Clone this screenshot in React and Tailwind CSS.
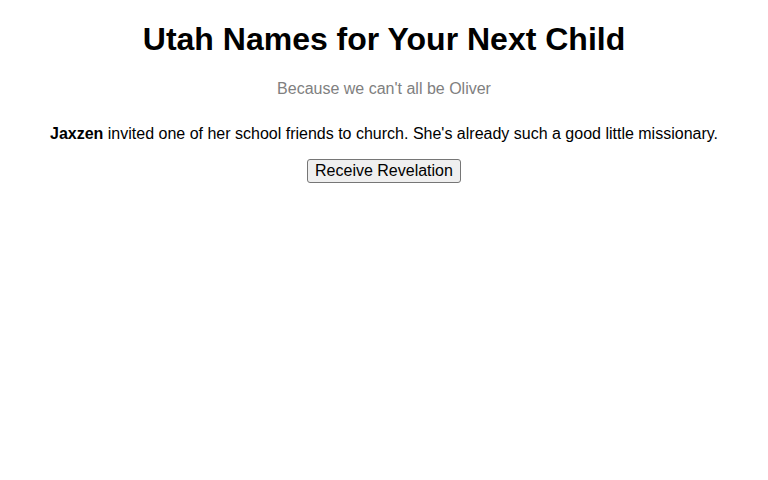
import React, { useState } from "react";

const names = [
  { name: "Jaxzen", text: "invited one of her school friends to church. She's already such a good little missionary." },
  { name: "Kolbee", text: "bore his testimony in sacrament meeting. He's going to be a bishop someday." },
  { name: "Brynlee", text: "memorized all the books of the Book of Mormon before she turned five." },
];

const App = () => {
  const [idx, setIdx] = useState(0);
  const item = names[idx];

  return (
    <div className="min-h-screen bg-white text-black text-center font-['Liberation_Sans',Arial,sans-serif]">
      <h1 className="text-[32px] font-bold leading-[37px] pt-[21px] mb-[22px]">
        Utah Names for Your Next Child
      </h1>
      <p className="text-[16px] leading-[18px] text-[#808080]">Because we can't all be Oliver</p>
      <p className="text-[16px] leading-[18px] mt-[27px]">
        <b>{item.name}</b> {item.text}
      </p>
      <button
        className="mt-[16px] text-[16px] leading-[18px] px-[7px] py-[2px] bg-[#efefef] border border-[#767676] rounded-[3px] hover:bg-[#e5e5e5]"
        onClick={() => setIdx((idx + 1) % names.length)}
      >
        Receive Revelation
      </button>
    </div>
  );
};

export default App;
